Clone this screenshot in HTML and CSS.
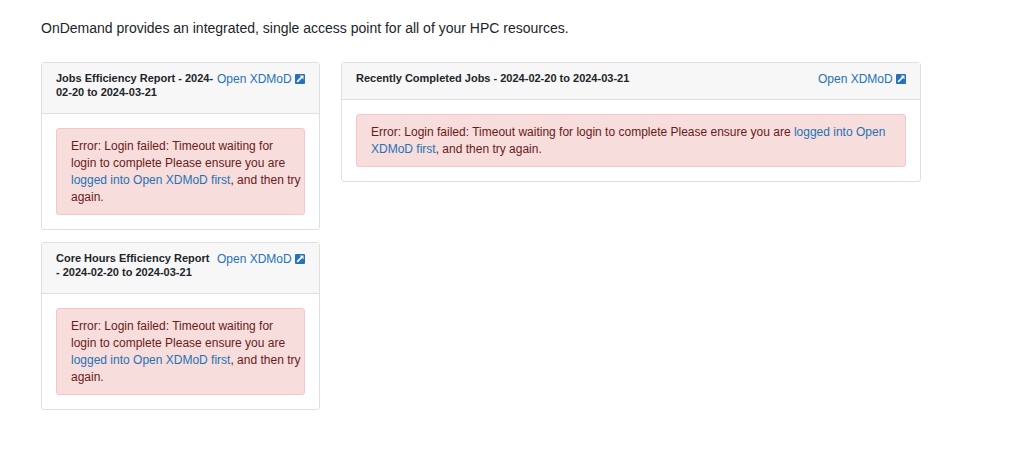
FILE: index.html
```html
<!DOCTYPE html>
<html lang="en">
<head>
    <meta charset="UTF-8">
    <meta name="viewport" content="width=device-width, initial-scale=1.0">
    <title>Dashboard - OnDemand</title>
    <link rel="stylesheet" href="styles.css">
</head>
<body>
    <svg class="symbols" aria-hidden="true">
        <symbol id="external-link" viewBox="0 0 10 10">
            <path fill="currentColor" fill-rule="evenodd" d="M1 0H9Q10 0 10 1V9Q10 10 9 10H1Q0 10 0 9V1Q0 0 1 0ZM4.6 1.5 5.9 2.8 1.5 7.2 2.8 8.5 7.2 4.1 8.5 5.4V1.5Z"/>
        </symbol>
    </svg>
    <main class="container">
        <p class="lead">OnDemand provides an integrated, single access point for all of your HPC resources.</p>
        <div class="row">
            <div class="column">
                <section class="card">
                    <div class="card-header">
                        <h2 class="card-title">Jobs Efficiency Report - 2024-02-20 to 2024-03-21</h2>
                        <a class="card-link" href="#">Open XDMoD <svg class="icon" aria-hidden="true"><use href="#external-link"/></svg></a>
                    </div>
                    <div class="card-body">
                        <div class="alert" role="alert">Error: Login failed: Timeout waiting for login to complete Please ensure you are <a href="#">logged into Open XDMoD first</a>, and then try again.</div>
                    </div>
                </section>
                <section class="card">
                    <div class="card-header">
                        <h2 class="card-title">Core Hours Efficiency Report - 2024-02-20 to 2024-03-21</h2>
                        <a class="card-link" href="#">Open XDMoD <svg class="icon" aria-hidden="true"><use href="#external-link"/></svg></a>
                    </div>
                    <div class="card-body">
                        <div class="alert" role="alert">Error: Login failed: Timeout waiting for login to complete Please ensure you are <a href="#">logged into Open XDMoD first</a>, and then try again.</div>
                    </div>
                </section>
            </div>
            <div class="column">
                <section class="card">
                    <div class="card-header">
                        <h2 class="card-title">Recently Completed Jobs - 2024-02-20 to 2024-03-21</h2>
                        <a class="card-link" href="#">Open XDMoD <svg class="icon" aria-hidden="true"><use href="#external-link"/></svg></a>
                    </div>
                    <div class="card-body">
                        <div class="alert" role="alert">Error: Login failed: Timeout waiting for login to complete Please ensure you are <a href="#">logged into Open XDMoD first</a>, and then try again.</div>
                    </div>
                </section>
            </div>
        </div>
    </main>
</body>
</html>
```
FILE: styles.css
```css
body {
    margin: 0;
    font-family: "Liberation Sans", Arial, sans-serif;
    font-size: 12px;
    line-height: 17px;
    color: #212529;
    background-color: #fff;
}
a {
    color: #2672b5;
    text-decoration: none;
}
a:hover {
    text-decoration: underline;
}
.symbols {
    display: none;
}
.container {
    max-width: 881px;
    padding: 17px 102px 20px 41px;
}
.lead {
    margin: 0 0 23px;
    font-size: 14px;
    line-height: 22px;
}
.row {
    display: grid;
    grid-template-columns: 279fr 580fr;
    gap: 21px;
    align-items: start;
}
.column {
    display: grid;
    gap: 12px;
}
.card {
    border: 1px solid #dfdfdf;
    border-radius: 3px;
}
.card-header {
    display: flex;
    justify-content: space-between;
    align-items: flex-start;
    gap: 2px;
    padding: 8px 14px;
    border-bottom: 1px solid #dfdfdf;
    background-color: #f7f7f7;
}
.card-title {
    margin: 0 0 6px;
    font-size: 11px;
    line-height: 14px;
}
.card-link {
    flex: none;
}
.icon {
    width: 10px;
    height: 10px;
    vertical-align: -1px;
}
.card-body {
    padding: 14px;
}
.alert {
    padding: 9px 3px 8px 14px;
    border: 1px solid #f5c6cb;
    border-radius: 3px;
    color: #6b1a1a;
    background-color: #f7dddc;
}
```
